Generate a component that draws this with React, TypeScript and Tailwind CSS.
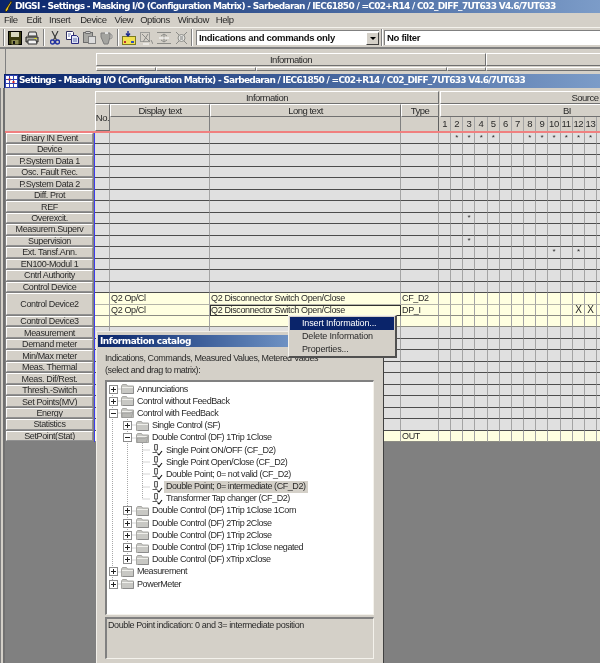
import React from "react";

const LONG = "Settings - Masking I/O (Configuration Matrix) - Sarbedaran / IEC61850 / =C02+R14 / C02_DIFF_7UT633 V4.6/7UT633";

type RowDef = {
  label: string;
  tone?: "y";
  sub?: { display?: string; long?: string; type?: string; marks?: Record<number, string>; sel?: boolean }[];
};

const rows: RowDef[] = [
  { label: "Binary IN Event", sub: [{ marks: { 2: "*", 3: "*", 4: "*", 5: "*", 8: "*", 9: "*", 10: "*", 11: "*", 12: "*", 13: "*" } }] },
  { label: "Device" },
  { label: "P.System Data 1" },
  { label: "Osc. Fault Rec." },
  { label: "P.System Data 2" },
  { label: "Diff. Prot" },
  { label: "REF" },
  { label: "Overexcit.", sub: [{ marks: { 3: "*" } }] },
  { label: "Measurem.Superv" },
  { label: "Supervision", sub: [{ marks: { 3: "*" } }] },
  { label: "Ext. Tansf.Ann.", sub: [{ marks: { 10: "*", 12: "*" } }] },
  { label: "EN100-Modul 1" },
  { label: "Cntrl Authority" },
  { label: "Control Device" },
  {
    label: "Control Device2",
    tone: "y",
    sub: [
      { display: "Q2 Op/Cl", long: "Q2 Disconnector Switch Open/Close", type: "CF_D2" },
      { display: "Q2 Op/Cl", long: "Q2 Disconnector Switch Open/Close", type: "DP_I", marks: { 12: "X", 13: "X" }, sel: true },
    ],
  },
  { label: "Control Device3", tone: "y" },
  { label: "Measurement" },
  { label: "Demand meter" },
  { label: "Min/Max meter" },
  { label: "Meas. Thermal" },
  { label: "Meas. Dif/Rest." },
  { label: "Thresh.-Switch" },
  { label: "Set Points(MV)" },
  { label: "Energy" },
  { label: "Statistics" },
  { label: "SetPoint(Stat)", tone: "y", sub: [{ type: "OUT" }] },
];

const nums = Array.from({ length: 14 }, (_, i) => i + 1);

function Cells({ tone, d, last }: { tone?: "y"; d: NonNullable<RowDef["sub"]>[number]; last: boolean }) {
  const bg = tone === "y" ? "bg-[#ffffe0]" : "bg-[#e0e0e0]";
  const bb = tone === "y" && !last ? "border-b-[#b4b4a8]" : tone === "y" ? "border-b-[#8c8c84]" : "border-b-[#4c4c4c]";
  const base = `${bg} ${bb} border-b h-full shrink-0 border-r border-r-[#a4a4a4] overflow-hidden`;
  return (
    <div className="flex h-[11.48px] text-[9px] leading-[10px] tracking-[-0.37px] text-[#2a2a2a]">
      <div className={`${base} w-[15px]`} />
      <div className={`${base} w-[100px] pl-[1px] whitespace-nowrap`}>{d.display}</div>
      <div className={`${base} w-[191px] pl-[1px] whitespace-nowrap ${d.sel ? "outline outline-1 -outline-offset-1 outline-[#303030]" : ""}`}>{d.long}</div>
      <div className={`${base} w-[38px] pl-[1px] whitespace-nowrap border-r-[#505050]`}>{d.type}</div>
      {nums.map((n) => (
        <div key={n} className={`${base} w-[12.17px] text-center ${d.marks?.[n] === "X" ? "text-[10px]" : "text-[8px]"}`}>
          {d.marks?.[n]}
        </div>
      ))}
    </div>
  );
}

function MatrixRow({ r }: { r: RowDef }) {
  const subs = r.sub ?? [{}];
  return (
    <div className={`flex shrink-0 overflow-hidden ${subs.length > 1 ? "h-[22.96px]" : "h-[11.48px]"}`}>
      <div className="w-[89px] h-full shrink-0 bg-[#808080] flex pl-[1px] pr-[1px] pb-[1px]">
        <div className="flex-1 min-h-0 flex items-center justify-center pt-[1px] bg-[#d4d0c8] border-t border-l border-t-white border-l-white border-r border-b border-r-[#909090] border-b-[#909090] text-[9px] leading-[9px] tracking-[-0.38px] text-[#2a2a2a] whitespace-nowrap overflow-hidden">
          {r.label}
        </div>
      </div>
      <div className="w-[1px] bg-[#3c3cf0] shrink-0" />
      <div className="flex flex-col">
        {subs.map((s, i) => (
          <Cells key={i} tone={r.tone} d={s} last={i === subs.length - 1} />
        ))}
      </div>
    </div>
  );
}

function HeadCell({ className = "", children }: { className?: string; children?: React.ReactNode }) {
  return (
    <div className={`shrink-0 flex items-center justify-center bg-[#d4d0c8] border-t border-l border-t-white border-l-white border-b border-r border-b-[#707070] border-r-[#707070] text-[9.5px] leading-none tracking-[-0.5px] text-[#2a2a2a] whitespace-nowrap overflow-hidden ${className}`}>
      {children}
    </div>
  );
}

const Sep = ({ m = "mx-[4px]" }: { m?: string }) => <div className={`w-[2px] h-[17px] border-l border-l-[#808080] border-r border-r-white shrink-0 ${m}`} />;

const Floppy = () => (
  <svg width="14" height="14" viewBox="0 0 14 14" className="shrink-0"><rect x="0.5" y="0.5" width="13" height="13" fill="#3a3a10" stroke="#000" /><rect x="3" y="1" width="8" height="5" fill="#d8d8c0" /><rect x="3.5" y="9" width="7" height="4.5" fill="#8a8a50" /><rect x="5" y="10" width="2" height="3" fill="#111" /></svg>
);
const Printer = () => (
  <svg width="14" height="14" viewBox="0 0 14 14" className="shrink-0"><path d="M4 1h7l1 4H3z" fill="#e8e8e8" stroke="#333" /><path d="M1 6h12v5H1z" fill="#a8a8a0" stroke="#222" /><path d="M3 9h8l1 4H3z" fill="#f4f4f4" stroke="#333" /><rect x="9.5" y="7" width="2" height="1" fill="#ee0" /></svg>
);
const Scissors = () => (
  <svg width="10" height="14" viewBox="0 0 10 14" className="shrink-0"><path d="M2 0l4.5 9M8 0L3.5 9" stroke="#333" strokeWidth="1.1" fill="none" /><circle cx="2.5" cy="11" r="2" fill="none" stroke="#2030a0" strokeWidth="1.4" /><circle cx="7.5" cy="11" r="2" fill="none" stroke="#2030a0" strokeWidth="1.4" /></svg>
);
const Copy = () => (
  <svg width="13" height="13" viewBox="0 0 13 13" className="shrink-0"><path d="M0.5 0.5h6l1 1v7h-7z" fill="#fff" stroke="#303060" /><path d="M5.5 4.5h5l2 2v6h-7z" fill="#dfe4f4" stroke="#2a2a80" /><path d="M2 3h3M2 5h2M7 8h4M7 10h4" stroke="#4050a0" strokeWidth="0.8" /></svg>
);
const PasteGrey = () => (
  <svg width="13" height="13" viewBox="0 0 13 13" className="shrink-0"><rect x="0.5" y="1.5" width="9" height="10" fill="#a8a8a4" stroke="#6c6c6c" /><rect x="3" y="0.5" width="4" height="2" fill="#d0d0d0" stroke="#707070" /><rect x="5.5" y="5.5" width="7" height="7" fill="#dcdcdc" stroke="#808080" /></svg>
);
const Mug = () => (
  <svg width="13" height="14" viewBox="0 0 13 14" className="shrink-0"><path d="M1 2h9v4l-2 7H4L1 6z" fill="#a4a4a0" stroke="#7c7c7c" /><path d="M10 3l2 1v3l-2 1" fill="none" stroke="#909090" /><path d="M5 1h3v2H5z" fill="#e0e0e0" /></svg>
);
const YellowBox = () => (
  <svg width="14" height="14" viewBox="0 0 14 14" className="shrink-0"><rect x="0.5" y="5.5" width="13" height="8" fill="#f0e050" stroke="#7a7a20" /><path d="M6 0v4M4 2.5L6 5l2-2.5" stroke="#1a2a90" strokeWidth="1.4" fill="none" /><rect x="2" y="10" width="2" height="2" fill="#c03030" /><rect x="9" y="10" width="3" height="2" fill="#3050c0" /></svg>
);
const Dis1 = () => (
  <svg width="13" height="14" viewBox="0 0 13 14" className="shrink-0"><rect x="0.5" y="1.5" width="9" height="9" fill="none" stroke="#9c9c98" /><path d="M2 3l8 8M8 3l-5 8M11 9l2 4" stroke="#8c8c88" /><path d="M3 13h6" stroke="#fff" /></svg>
);
const Dis2 = () => (
  <svg width="14" height="14" viewBox="0 0 14 14" className="shrink-0"><path d="M0 1.5h14M0 12.5h14M7 3v8M4 5l3-2 3 2M4 9l3 2 3-2" stroke="#8c8c88" fill="none" /><path d="M2 7h10" stroke="#fff" /></svg>
);
const Dis3 = () => (
  <svg width="13" height="14" viewBox="0 0 13 14" className="shrink-0"><path d="M1 1l3 3M12 1L9 4M1 13l3-3M12 13l-3-3" stroke="#8c8c88" /><circle cx="6.5" cy="7" r="3.5" fill="#e4e4e0" stroke="#8c8c88" /><path d="M5 6h3M5 8h3" stroke="#808080" /></svg>
);

const Folder = ({ open }: { open?: boolean }) => (
  <svg width="13" height="10" viewBox="0 0 13 10" className="shrink-0">
    <path d="M0.5 2l1-1.5h4l1 1.5h6v7.5h-12z" fill="#c8c8c4" stroke="#a8a8a4" />
    <path d="M1 3.5h11" stroke="#f0f0ec" />
    {open ? <path d="M1 5h8l3-1.5-1.5 6H1z" fill="#b8b8b4" stroke="#909090" strokeWidth="0.6" /> : <path d="M12.5 3v6.5H2" stroke="#8c8c8c" fill="none" />}
  </svg>
);

const Leaf = () => (
  <svg width="12" height="12" viewBox="0 0 12 12" className="shrink-0">
    <path d="M3.5 0.5h3v5.5h-3z" fill="#e8e8e8" stroke="#606060" />
    <path d="M5 6v3M1.5 8.5h5" stroke="#606060" />
    <path d="M6.5 9.5l1.5 1.5 3-4" stroke="#111" strokeWidth="1.1" fill="none" />
  </svg>
);

const Exp = ({ open }: { open?: boolean }) => (
  <svg width="9" height="9" viewBox="0 0 9 9" className="shrink-0">
    <rect x="0.5" y="0.5" width="8" height="8" fill="#fff" stroke="#8c8c8c" />
    <path d={open ? "M2 4.5h5" : "M2 4.5h5M4.5 2v5"} stroke="#222" />
  </svg>
);

type Tree = { t: string; l: 0 | 1 | 2; open?: boolean; sel?: boolean };
const tree: Tree[] = [
  { t: "Annunciations", l: 0 },
  { t: "Control without FeedBack", l: 0 },
  { t: "Control with FeedBack", l: 0, open: true },
  { t: "Single Control (SF)", l: 1 },
  { t: "Double Control (DF) 1Trip 1Close", l: 1, open: true },
  { t: "Single Point ON/OFF (CF_D2)", l: 2 },
  { t: "Single Point Open/Close (CF_D2)", l: 2 },
  { t: "Double Point; 0= not valid (CF_D2)", l: 2 },
  { t: "Double Point; 0= intermediate (CF_D2)", l: 2, sel: true },
  { t: "Transformer Tap changer (CF_D2)", l: 2 },
  { t: "Double Control (DF) 1Trip 1Close 1Com", l: 1 },
  { t: "Double Control (DF) 2Trip 2Close", l: 1 },
  { t: "Double Control (DF) 1Trip 2Close", l: 1 },
  { t: "Double Control (DF) 1Trip 1Close negated", l: 1 },
  { t: "Double Control (DF) xTrip xClose", l: 1 },
  { t: "Measurement", l: 0 },
  { t: "PowerMeter", l: 0 },
];

function TreeRow({ n }: { n: Tree }) {
  return (
    <div className="relative flex items-center h-[12.2px] text-[9px] leading-none tracking-[-0.44px] text-[#2a2a2a] whitespace-nowrap">
      {n.l === 0 && (
        <div className="flex items-center pl-[1.5px]">
          <Exp open={n.open} />
          <div className="w-[3.5px]" />
          <Folder open={n.open} />
          <span className="ml-[3px]">{n.t}</span>
        </div>
      )}
      {n.l === 1 && (
        <div className="flex items-center pl-[15.5px]">
          <Exp open={n.open} />
          <div className="w-[4.5px]" />
          <Folder open={n.open} />
          <span className="ml-[3px]">{n.t}</span>
        </div>
      )}
      {n.l === 2 && (
        <div className="flex items-center pl-[44px]">
          <Leaf />
          <span className={`ml-[1px] px-[2px] h-[12px] flex items-center ${n.sel ? "bg-[#d4d0c8]" : ""}`}>{n.t}</span>
        </div>
      )}
    </div>
  );
}

function CatalogDialog() {
  return (
    <div className="absolute left-[96px] top-[331px] w-[288px] h-[340px] bg-[#d4d0c8] border-l border-l-[#f0eee8] border-t border-t-[#f0eee8] border-r border-r-[#404040] pl-[1px] pt-[3px] pr-[1px]">
      <div className="h-[12px] bg-gradient-to-r from-[#0a246a] to-[#a6caf0] text-white font-bold text-[9px] leading-[12px] pl-[2px] whitespace-nowrap overflow-hidden font-['DejaVu_Sans',sans-serif] tracking-[-0.5px]">
        Information catalog
      </div>
      <div className="mt-[6px] pl-[7px] text-[9px] leading-[11.5px] tracking-[-0.42px] text-[#2a2a2a] whitespace-nowrap overflow-hidden">
        <div>Indications, Commands, Measured Values, Metered Values</div>
        <div>(select and drag to matrix):</div>
      </div>
      <div className="relative mt-[4px] ml-[7px] w-[269px] h-[235px] bg-white border-t-2 border-l-2 border-t-[#808080] border-l-[#808080] border-b border-r border-b-[#f4f2ec] border-r-[#f4f2ec] pt-[1px] overflow-hidden">
        <svg className="absolute left-0 top-0" width="265" height="230" stroke="#a8a8a8" strokeDasharray="1 1" fill="none">
          <path d="M5.5 7V201M5.5 7h9M5.5 19h9M5.5 31h9M5.5 190h9M5.5 202h9" />
          <path d="M20.5 37V178M20.5 43h9M20.5 56h9M20.5 129h9M20.5 141h9M20.5 153h9M20.5 166h9M20.5 178h9" />
          <path d="M35.5 61V117M35.5 68h8M35.5 80h8M35.5 92h8M35.5 105h8M35.5 117h8" />
        </svg>
        <div className="relative">
          {tree.map((n) => (
            <TreeRow key={n.t} n={n} />
          ))}
        </div>
      </div>
      <div className="mt-[2px] ml-[7px] w-[269px] h-[42px] border-t-2 border-l-2 border-t-[#808080] border-l-[#808080] border-b border-r border-b-[#f4f2ec] border-r-[#f4f2ec] pl-[1px] pt-[1px] text-[9px] leading-[11px] tracking-[-0.4px] text-[#2a2a2a] whitespace-nowrap">
        Double Point indication: 0 and 3= intermediate position
      </div>
    </div>
  );
}

function ContextMenu() {
  return (
    <div className="absolute left-[288px] top-[315px] w-[109px] h-[43px] bg-[#d4d0c8] border-t border-l border-t-[#f4f2ec] border-l-[#f4f2ec] border-b-2 border-r-2 border-b-[#505050] border-r-[#505050] text-[9px] leading-none tracking-[-0.15px] text-[#2a2a2a] px-[1px] pt-[1px] whitespace-nowrap">
      <div className="h-[13px] bg-[#0a246a] text-white flex items-center pl-[12px]">Insert Information...</div>
      <div className="h-[13px] flex items-center pl-[12px]">Delete Information</div>
      <div className="h-[13px] flex items-center pl-[12px]">Properties...</div>
    </div>
  );
}

export default function App() {
  return (
    <div className="relative w-[600px] h-[663px] overflow-hidden bg-[#d4d0c8] font-['Liberation_Sans',sans-serif] blur-[0.3px]">
      {/* main title */}
      <div className="h-[13px] flex items-center bg-gradient-to-r from-[#0a246a] to-[#7c9cc8] text-white font-bold text-[9px] whitespace-nowrap overflow-hidden font-['DejaVu_Sans',sans-serif] tracking-[-0.7px]">
        <svg width="9" height="12" viewBox="0 0 9 12" className="ml-[4px] mr-[2px] shrink-0">
          <path d="M7 0L3 6 1 9l1 2 2-2 1-3 3-5z" fill="#e8c020" stroke="#201800" strokeWidth="0.7" />
        </svg>
        DIGSI - {LONG}
      </div>
      {/* menu */}
      <div className="h-[14px] flex items-center text-[9.5px] leading-none tracking-[-0.45px] text-[#2a2a2a] whitespace-nowrap">
        <span className="ml-[4px]">File</span>
        <span className="ml-[9px]">Edit</span>
        <span className="ml-[8px]">Insert</span>
        <span className="ml-[10px]">Device</span>
        <span className="ml-[8px]">View</span>
        <span className="ml-[7px]">Options</span>
        <span className="ml-[8px]">Window</span>
        <span className="ml-[7px]">Help</span>
      </div>
      {/* toolbar */}
      <div className="h-[20px] flex items-center border-t border-t-[#f4f2ec]">
        <Sep m="ml-[3px] mr-[3px]" />
        <Floppy />
        <div className="w-[3px]" />
        <Printer />
        <Sep m="mx-[4px]" />
        <div className="w-[1px]" />
        <Scissors />
        <div className="w-[6px]" />
        <Copy />
        <div className="w-[4px]" />
        <PasteGrey />
        <div className="w-[4px]" />
        <Mug />
        <Sep m="ml-[4px] mr-[3px]" />
        <YellowBox />
        <div className="w-[4px]" />
        <Dis1 />
        <div className="w-[4px]" />
        <Dis2 />
        <div className="w-[4px]" />
        <Dis3 />
        <Sep m="ml-[3px] mr-[3px]" />
        <div className="w-[183px] h-[15px] shrink-0 bg-white border-t border-l border-t-[#808080] border-l-[#808080] flex items-center text-[9.5px] font-bold tracking-[-0.3px] text-[#111] whitespace-nowrap">
          <span className="ml-[2px] flex-1 overflow-hidden">Indications and commands only</span>
          <div className="w-[13px] h-[13px] bg-[#d4d0c8] border-t border-l border-t-white border-l-white border-b border-r border-b-[#404040] border-r-[#404040] flex items-center justify-center">
            <div className="w-0 h-0 border-l-[3px] border-r-[3px] border-t-[3px] border-l-transparent border-r-transparent border-t-black" />
          </div>
        </div>
        <Sep m="ml-[2px] mr-[1px]" />
        <div className="flex-1 h-[15px] bg-white border-t border-l border-t-[#808080] border-l-[#808080] flex items-center text-[9.5px] font-bold tracking-[-0.3px] text-[#111] whitespace-nowrap">
          <span className="ml-[2px]">No filter</span>
        </div>
      </div>
      {/* back window */}
      <div className="h-[27px] overflow-hidden border-t-2 border-t-[#808080] pl-[5px]">
        <div className="h-full border-l border-l-[#808080] pt-[4px] flex items-start">
          <div className="w-[90px] shrink-0" />
          <div className="flex flex-col shrink-0">
            <div className="flex">
              <HeadCell className="w-[390px] h-[13px]">Information</HeadCell>
              <HeadCell className="w-[120px] h-[13px]" />
            </div>
            <div className="flex mt-[1px]">
              <HeadCell className="w-[60px] h-[4px]" />
              <HeadCell className="w-[100px] h-[4px]" />
              <HeadCell className="w-[191px] h-[4px]" />
              <HeadCell className="w-[39px] h-[4px]" />
              <HeadCell className="w-[120px] h-[4px]" />
            </div>
          </div>
        </div>
      </div>
      {/* front window title */}
      <div className="h-[14px] flex items-center bg-gradient-to-r from-[#0a246a] to-[#7c9cc8] text-white font-bold text-[9px] whitespace-nowrap overflow-hidden font-['DejaVu_Sans',sans-serif] tracking-[-0.72px] ml-[4px]">
        <svg width="13" height="13" viewBox="0 0 13 13" className="ml-[1px] mr-[1px] shrink-0">
          <rect x="0.5" y="0.5" width="12" height="12" fill="#fff" stroke="#3040b0" />
          <path d="M4.5 0v13M8.5 0v13M0 4.5h13M0 8.5h13" stroke="#3040b0" />
          <rect x="3.5" y="3.5" width="2" height="2" fill="#e02020" />
          <rect x="7.5" y="6" width="2" height="2" fill="#e02020" />
        </svg>
        {LONG}
      </div>
      {/* client */}
      <div className="h-[575px] flex">
        <div className="w-[1px] bg-[#808080] shrink-0" />
        <div className="w-[2px] shrink-0" />
        <div className="w-[2px] bg-[#707070] shrink-0" />
        <div className="flex-1 min-w-0 flex flex-col bg-[#808080] overflow-hidden">
          <div className="bg-[#d4d0c8] shrink-0 pt-[3px]">
            <div className="flex h-[13px]">
              <div className="w-[90px] shrink-0" />
              <HeadCell className="w-[344px] h-full">Information</HeadCell>
              <HeadCell className="w-[290px] h-full ml-[1px]">Source</HeadCell>
            </div>
            <div className="flex h-[27px]">
              <div className="w-[90px] shrink-0" />
              <HeadCell className="w-[15px] h-full">No.</HeadCell>
              <div className="flex flex-col shrink-0">
                <div className="flex h-[13px] shrink-0">
                  <HeadCell className="w-[100px] h-full">Display text</HeadCell>
                  <HeadCell className="w-[191px] h-full">Long text</HeadCell>
                  <HeadCell className="w-[38px] h-full">Type</HeadCell>
                  <HeadCell className="w-[254px] h-full ml-[1px]">BI</HeadCell>
                </div>
                <div className="flex h-[14px] shrink-0 text-[9.5px] leading-[14px] tracking-[-0.4px] text-[#2a2a2a]">
                  <div className="w-[100px] shrink-0 border-r border-r-[#808080]" />
                  <div className="w-[191px] shrink-0 border-r border-r-[#808080]" />
                  <div className="w-[38px] shrink-0 border-r border-r-[#606060]" />
                  {nums.map((n) => (
                    <div key={n} className="w-[12.17px] shrink-0 text-center border-r border-r-[#a4a4a4]">{n < 14 ? n : ""}</div>
                  ))}
                </div>
              </div>
            </div>
          </div>
          <div className="h-[1.5px] bg-[#f08080] shrink-0" />
          {rows.map((r) => (
            <MatrixRow key={r.label} r={r} />
          ))}
        </div>
      </div>
      <CatalogDialog />
      <ContextMenu />
    </div>
  );
}
